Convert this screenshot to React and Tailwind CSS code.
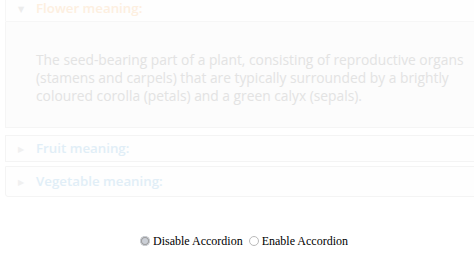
export default function App() {
  const sans = { fontFamily: '"Open Sans", "DejaVu Sans", sans-serif' };
  return (
    <div className="w-[474px] h-[258px] overflow-hidden bg-white relative">
      <div className="ml-[5px] -mt-[8px] w-[480px]" style={sans}>
        <div className="h-[30px] pt-[3px] flex items-center border border-[#f6f6f6] bg-[#fefefe] rounded-t-[3px]">
          <span className="w-[30px] pl-[12px] text-[8px] text-[#ececec]">▼</span>
          <span className="text-[13.3px] font-semibold text-[#fdefe0]">Flower meaning:</span>
        </div>
        <div className="h-[106px] border border-[#f5f5f5] border-t-0 bg-[#fcfcfc] pl-[30px] pr-[10px] pt-[29px]">
          <p className="text-[13.8px] leading-[18px] text-[#e3e3e3] w-[440px]">
            The seed-bearing part of a plant, consisting of reproductive organs (stamens and carpels) that are typically surrounded by a brightly coloured corolla (petals) and a green calyx (sepals).
          </p>
        </div>
        <div className="mt-[7px] h-[27px] flex items-center border border-[#f4f4f4] bg-[#fefefe]">
          <span className="w-[30px] pl-[12px] text-[8px] text-[#f0f0f0]">▶</span>
          <span className="text-[13.3px] font-semibold text-[#e1eef7]">Fruit meaning:</span>
        </div>
        <div className="mt-[4px] h-[31px] flex items-center border border-[#f4f4f4] bg-[#fefefe] rounded-b-[3px]">
          <span className="w-[30px] pl-[12px] text-[8px] text-[#f0f0f0]">▶</span>
          <span className="text-[13.3px] font-semibold text-[#e1eef7]">Vegetable meaning:</span>
        </div>
      </div>
      <div className="mt-[35px] flex justify-center items-center pl-[14px] text-[12px] text-black" style={{ fontFamily: '"Liberation Serif", serif' }}>
        <label className="flex items-center">
          <input type="radio" name="acc" defaultChecked className="w-[10px] h-[10px] mr-[3px] accent-gray-400 opacity-50" />
          Disable Accordion
        </label>
        <label className="flex items-center ml-[6px]">
          <input type="radio" name="acc" className="w-[10px] h-[10px] mr-[3px] opacity-50" />
          Enable Accordion
        </label>
      </div>
    </div>
  );
}
